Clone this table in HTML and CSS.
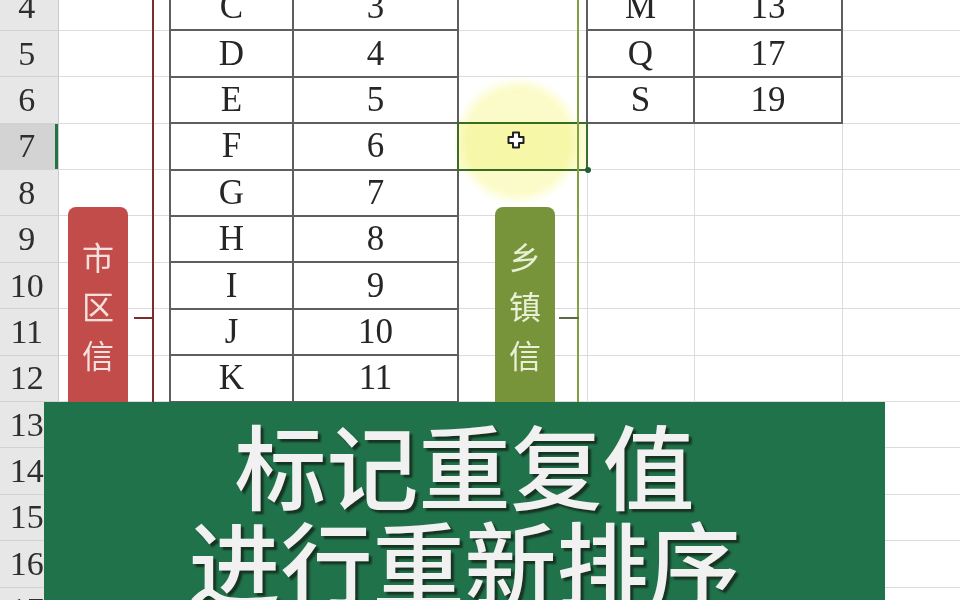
FILE: index.html
```html
<!DOCTYPE html>
<html lang="zh-CN">
<head>
<meta charset="utf-8">
<title>标记重复值 进行重新排序</title>
<link rel="stylesheet" href="styles.css">
</head>
<body>
<div class="stage">
  <table class="sheet">
    <colgroup>
      <col class="c-rh"><col class="c-a"><col class="c-b"><col class="c-c"><col class="c-d"><col class="c-e"><col class="c-f"><col class="c-g">
    </colgroup>
    <tbody>
      <tr><td class="rh">4</td><td></td><td class="t">C</td><td class="t">3</td><td></td><td class="t">M</td><td class="t">13</td><td></td></tr>
      <tr><td class="rh">5</td><td></td><td class="t">D</td><td class="t">4</td><td></td><td class="t">Q</td><td class="t">17</td><td></td></tr>
      <tr><td class="rh">6</td><td></td><td class="t">E</td><td class="t">5</td><td></td><td class="t">S</td><td class="t">19</td><td></td></tr>
      <tr><td class="rh rh-active">7</td><td></td><td class="t">F</td><td class="t">6</td><td class="sel"></td><td></td><td></td><td></td></tr>
      <tr><td class="rh">8</td><td></td><td class="t">G</td><td class="t">7</td><td></td><td></td><td></td><td></td></tr>
      <tr><td class="rh">9</td><td></td><td class="t">H</td><td class="t">8</td><td></td><td></td><td></td><td></td></tr>
      <tr><td class="rh">10</td><td></td><td class="t">I</td><td class="t">9</td><td></td><td></td><td></td><td></td></tr>
      <tr><td class="rh">11</td><td></td><td class="t">J</td><td class="t">10</td><td></td><td></td><td></td><td></td></tr>
      <tr><td class="rh">12</td><td></td><td class="t">K</td><td class="t">11</td><td></td><td></td><td></td><td></td></tr>
      <tr><td class="rh">13</td><td></td><td class="t"></td><td class="t"></td><td></td><td></td><td></td><td></td></tr>
      <tr><td class="rh">14</td><td></td><td class="t"></td><td class="t"></td><td></td><td></td><td></td><td></td></tr>
      <tr><td class="rh">15</td><td></td><td class="t"></td><td class="t"></td><td></td><td></td><td></td><td></td></tr>
      <tr><td class="rh">16</td><td></td><td class="t"></td><td class="t"></td><td></td><td></td><td></td><td></td></tr>
      <tr><td class="rh">17</td><td></td><td class="t"></td><td class="t"></td><td></td><td></td><td></td><td></td></tr>
    </tbody>
  </table>

  <div class="glow"></div>
  <svg class="cursor" width="20" height="20" viewBox="0 0 20 20" aria-hidden="true">
    <path d="M7 2.5h6v4.5h4.5v6H13v4.5H7V13H2.5V7H7z" fill="#fff" stroke="#222" stroke-width="2" stroke-linejoin="round"/>
  </svg>

  <div class="brace brace-red"><span class="tick"></span></div>
  <div class="brace brace-green"><span class="tick"></span></div>

  <div class="label label-red">市区信息</div>
  <div class="label label-green">乡镇信息</div>

  <div class="banner">
    <p class="banner-line">标记重复值</p>
    <p class="banner-line">进行重新排序</p>
  </div>
</div>
</body>
</html>
```

FILE: styles.css
```css
html, body {
  margin: 0;
  padding: 0;
  background: #fff;
}

.stage {
  position: relative;
  width: 960px;
  height: 600px;
  overflow: hidden;
  background: #fff;
}

.sheet {
  border-collapse: collapse;
  table-layout: fixed;
  width: 962px;
  margin-top: -17px;
  font-family: "Liberation Serif", "Noto Sans CJK SC", serif;
  font-size: 35px;
  color: #262626;
}

.c-rh { width: 58px; }
.c-a { width: 112px; }
.c-b { width: 123px; }
.c-c { width: 165px; }
.c-d { width: 129px; }
.c-e { width: 107px; }
.c-f { width: 148px; }
.c-g { width: 120px; }

.sheet tr { height: 46.4px; }

.sheet td {
  border: 1px solid #dcdcdc;
  padding: 0;
  text-align: center;
  vertical-align: middle;
  line-height: 40px;
}

.sheet td.t {
  border: 2px solid #5e5e5e;
}

.sheet td.rh {
  background: #e7e7e7;
  color: #2e2e2e;
  border-left: 0;
  border-right: 1px solid #c9c9c9;
  border-top: 1px solid #d2d2d2;
  border-bottom: 1px solid #d2d2d2;
  padding-right: 4px;
  font-size: 34px;
}

.sheet td.rh-active {
  background: #d3d3d3;
  box-shadow: inset -3px 0 0 #217346;
}

.sheet td.sel {
  position: relative;
  background: #fbfbd6;
  outline: 2px solid #3b6d2a;
  outline-offset: -1px;
}

.sheet td.sel::after {
  content: "";
  position: absolute;
  right: -4px;
  bottom: -4px;
  width: 6px;
  height: 6px;
  background: #1f5f33;
  border-radius: 50%;
}

.glow {
  position: absolute;
  left: 453px;
  top: 76px;
  width: 130px;
  height: 130px;
  border-radius: 50%;
  background: radial-gradient(circle, rgba(250, 250, 180, 0.75) 0, rgba(250, 250, 180, 0.7) 52px, rgba(252, 252, 200, 0.35) 60px, rgba(255, 255, 255, 0) 65px);
  mix-blend-mode: multiply;
}

.cursor {
  position: absolute;
  left: 506px;
  top: 130px;
}

.brace {
  position: absolute;
  top: 0;
  width: 2px;
  height: 402px;
}

.brace .tick {
  position: absolute;
  top: 317px;
  right: 0;
  width: 20px;
  height: 2px;
  background: inherit;
}

.brace-red {
  left: 152px;
  background: #7e2d2d;
}

.brace-green {
  left: 577px;
  background: #82a03e;
}

.brace-green .tick {
  background: #5c6b45;
}

.label {
  position: absolute;
  top: 207px;
  width: 60px;
  height: 196px;
  overflow: hidden;
  border-radius: 8px 8px 0 0;
  box-sizing: border-box;
  padding-top: 35px;
  display: flex;
  justify-content: center;
  writing-mode: vertical-rl;
  font-family: "Noto Sans CJK SC", sans-serif;
  font-size: 32px;
  letter-spacing: 17px;
  line-height: 60px;
}

.label-red {
  left: 68px;
  background: #c24c49;
  color: #f6e0de;
}

.label-green {
  left: 495px;
  background: #78943a;
  color: #e9f0d6;
}

.banner {
  position: absolute;
  left: 44px;
  top: 402px;
  width: 841px;
  height: 220px;
  background: #20724a;
  box-sizing: border-box;
  padding-top: 12px;
  text-align: center;
  font-family: "Noto Sans CJK SC", sans-serif;
  font-weight: 500;
  font-size: 92px;
  line-height: 97px;
  color: #f1f1f1;
  text-shadow: 3px 3px 2px rgba(20, 30, 20, 0.75);
}

.banner-line {
  margin: 0;
  white-space: nowrap;
}
```
